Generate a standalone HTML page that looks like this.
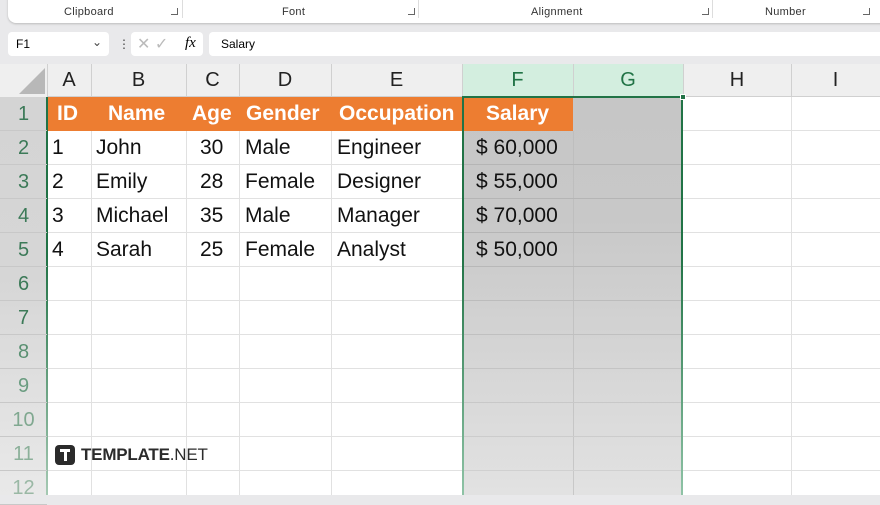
<!DOCTYPE html>
<html><head><meta charset="utf-8"><style>
*{margin:0;padding:0;box-sizing:border-box}
body{width:880px;height:495px;overflow:hidden;background:#e9e9eb;font-family:"Liberation Sans",sans-serif;position:relative}
.rib{position:absolute;left:8px;top:-10px;width:880px;height:33px;background:#fff;border-radius:8px;box-shadow:0 1px 2px #bbb}
.rl{position:absolute;top:6px;font-size:11px;color:#333;letter-spacing:.3px}
.sep{position:absolute;top:0;width:1px;height:18px;background:#ddd}
.dl{position:absolute;top:8px;width:7px;height:7px;border:1px solid #666;border-width:0 1px 1px 0}
.box{position:absolute;background:#fff;border-radius:4px;top:32px;height:24px}
.a{position:absolute}
.v{position:absolute;top:97px;width:1px;height:398px;background:#e1e1e1}
.hv{position:absolute;top:64px;width:1px;height:33px;background:#d0d0d0}
.hl{position:absolute;left:47px;width:833px;height:1px;background:#e1e1e1}
.ch{position:absolute;top:64px;height:33px;line-height:33px;text-align:center;font-size:20px;color:#222}
.rh{position:absolute;left:0;width:47px;height:34px;line-height:34px;text-align:center;font-size:20px;color:#3c7a58;border-bottom:1px solid #c8c8c8}
.t{position:absolute;height:34px;line-height:34px;font-size:21px;color:#111;white-space:nowrap}
.b{color:#fff;font-weight:bold}
</style></head><body>
<div class="rib"></div>
<div class="rl" style="left:64px">Clipboard</div><div class="dl" style="left:171px"></div><div class="sep" style="left:182px"></div>
<div class="rl" style="left:282px">Font</div><div class="dl" style="left:408px"></div><div class="sep" style="left:418px"></div>
<div class="rl" style="left:531px">Alignment</div><div class="dl" style="left:702px"></div><div class="sep" style="left:712px"></div>
<div class="rl" style="left:765px">Number</div><div class="dl" style="left:863px"></div>
<div class="box" style="left:8px;width:101px"><span style="position:absolute;left:8px;top:5px;font-size:12px">F1</span><span style="position:absolute;left:84px;top:3px;font-size:12px;color:#444">⌄</span></div>
<div style="position:absolute;left:118px;top:37px;font-size:12px;color:#444">⋮</div>
<div class="box" style="left:131px;width:72px"><span style="position:absolute;left:6px;top:2px;font-size:16px;color:#bbb">✕ ✓</span><span style="position:absolute;left:54px;top:3px;font-size:15px;font-style:italic;font-family:'Liberation Serif',serif">fx</span></div>
<div class="box" style="left:209px;width:680px;border-radius:4px 0 0 4px"><span style="position:absolute;left:12px;top:5px;font-size:12px">Salary</span></div>

<!-- column headers -->
<div class="a" style="left:0;top:64px;width:880px;height:33px;background:#efefef;border-bottom:1px solid #d0d0d0"></div>
<div class="a" style="left:462px;top:64px;width:221px;height:33px;background:#d3eedf"></div>
<div class="a" style="left:0;top:64px;width:47px;height:33px;background:#efefef"><div style="position:absolute;right:2px;bottom:3px;width:0;height:0;border-left:26px solid transparent;border-bottom:26px solid #b8b8b8"></div></div>
<div class="hv" style="left:47px"></div><div class="hv" style="left:91px"></div><div class="hv" style="left:186px"></div><div class="hv" style="left:239px"></div><div class="hv" style="left:331px"></div><div class="hv" style="left:462px"></div><div class="hv" style="left:573px"></div><div class="hv" style="left:683px"></div><div class="hv" style="left:791px"></div>
<div class="ch" style="left:47px;width:44px">A</div><div class="ch" style="left:91px;width:95px">B</div><div class="ch" style="left:186px;width:53px">C</div><div class="ch" style="left:239px;width:92px">D</div><div class="ch" style="left:331px;width:131px">E</div><div class="ch" style="left:462px;width:111px;color:#217346">F</div><div class="ch" style="left:573px;width:110px;color:#217346">G</div><div class="ch" style="left:683px;width:108px">H</div><div class="ch" style="left:791px;width:89px">I</div>

<!-- grid -->
<div class="a" style="left:47px;top:97px;width:833px;height:398px;background:#fff"></div>
<div class="hl" style="top:130px"></div><div class="hl" style="top:164px"></div><div class="hl" style="top:198px"></div><div class="hl" style="top:232px"></div><div class="hl" style="top:266px"></div><div class="hl" style="top:300px"></div><div class="hl" style="top:334px"></div><div class="hl" style="top:368px"></div><div class="hl" style="top:402px"></div><div class="hl" style="top:436px"></div><div class="hl" style="top:470px"></div>
<div class="v" style="left:91px"></div><div class="v" style="left:186px"></div><div class="v" style="left:239px"></div><div class="v" style="left:331px"></div><div class="v" style="left:791px"></div>
<div class="a" style="left:47px;top:97px;width:415px;height:34px;background:#ed7d31"></div>

<!-- selection -->
<div class="a" style="left:464px;top:98px;width:217px;height:397px;background:linear-gradient(#c6c6c6,#c8c8c8 30%,#e2e2e2)"></div>
<div class="a" style="left:464px;top:98px;width:109px;height:33px;background:#ed7d31"></div>
<div class="a" style="left:573px;top:131px;width:1px;height:364px;background:#b8b8b8;opacity:.6"></div>
<div class="a" style="left:464px;top:164px;width:217px;height:1px;background:#b5b5b5"></div><div class="a" style="left:464px;top:198px;width:217px;height:1px;background:#b5b5b5"></div><div class="a" style="left:464px;top:232px;width:217px;height:1px;background:#b5b5b5"></div><div class="a" style="left:464px;top:266px;width:217px;height:1px;background:#b8b8b8"></div><div class="a" style="left:464px;top:300px;width:217px;height:1px;background:#bcbcbc"></div><div class="a" style="left:464px;top:334px;width:217px;height:1px;background:#c0c0c0"></div><div class="a" style="left:464px;top:368px;width:217px;height:1px;background:#c4c4c4"></div><div class="a" style="left:464px;top:402px;width:217px;height:1px;background:#c8c8c8"></div><div class="a" style="left:464px;top:436px;width:217px;height:1px;background:#cccccc"></div><div class="a" style="left:464px;top:470px;width:217px;height:1px;background:#d0d0d0"></div>
<div class="a" style="left:462px;top:96px;width:2px;height:399px;background:linear-gradient(#217346,#217346 40%,#8fc3a6)"></div>
<div class="a" style="left:681px;top:96px;width:2px;height:399px;background:linear-gradient(#217346,#217346 40%,#8fc3a6)"></div>
<div class="a" style="left:462px;top:96px;width:221px;height:2px;background:#217346"></div>
<div class="a" style="left:680px;top:94px;width:6px;height:6px;background:#217346;border:1px solid #fff"></div>

<!-- row headers -->
<div class="a" style="left:0;top:97px;width:47px;height:398px;background:linear-gradient(#d4d4d4,#d6d6d6 45%,#e9e9e9)"></div>
<div class="a" style="left:46px;top:97px;width:2px;height:398px;background:linear-gradient(#217346,#217346 40%,#a5c9b3)"></div>
<div class="rh" style="top:97px">1</div><div class="rh" style="top:131px">2</div><div class="rh" style="top:165px">3</div><div class="rh" style="top:199px">4</div><div class="rh" style="top:233px">5</div><div class="rh" style="top:267px">6</div><div class="rh" style="top:301px">7</div><div class="rh" style="top:335px;color:#5a9072">8</div><div class="rh" style="top:369px;color:#6a9c80">9</div><div class="rh" style="top:403px;color:#80a890">10</div><div class="rh" style="top:437px;color:#8cb09a">11</div><div class="rh" style="top:471px;color:#9ab8a5">12</div>

<!-- text -->
<div class="t b" style="left:57px;top:97px">ID</div><div class="t b" style="left:108px;top:97px">Name</div><div class="t b" style="left:192px;top:97px">Age</div><div class="t b" style="left:246px;top:97px">Gender</div><div class="t b" style="left:339px;top:97px">Occupation</div><div class="t b" style="left:486px;top:97px">Salary</div>
<div class="t" style="left:52px;top:131px">1</div><div class="t" style="left:96px;top:131px">John</div><div class="t" style="left:200px;top:131px">30</div><div class="t" style="left:245px;top:131px">Male</div><div class="t" style="left:337px;top:131px">Engineer</div><div class="t" style="left:476px;top:131px">$ 60,000</div>
<div class="t" style="left:52px;top:165px">2</div><div class="t" style="left:96px;top:165px">Emily</div><div class="t" style="left:200px;top:165px">28</div><div class="t" style="left:245px;top:165px">Female</div><div class="t" style="left:337px;top:165px">Designer</div><div class="t" style="left:476px;top:165px">$ 55,000</div>
<div class="t" style="left:52px;top:199px">3</div><div class="t" style="left:96px;top:199px">Michael</div><div class="t" style="left:200px;top:199px">35</div><div class="t" style="left:245px;top:199px">Male</div><div class="t" style="left:337px;top:199px">Manager</div><div class="t" style="left:476px;top:199px">$ 70,000</div>
<div class="t" style="left:52px;top:233px">4</div><div class="t" style="left:96px;top:233px">Sarah</div><div class="t" style="left:200px;top:233px">25</div><div class="t" style="left:245px;top:233px">Female</div><div class="t" style="left:337px;top:233px">Analyst</div><div class="t" style="left:476px;top:233px">$ 50,000</div>

<!-- logo -->
<div style="position:absolute;left:55px;top:445px;width:20px;height:20px;background:#2b2b2b;border-radius:4px"><div style="position:absolute;left:5px;top:4px;width:10px;height:3px;background:#fff"></div><div style="position:absolute;left:8.5px;top:4px;width:3px;height:12px;background:#fff"></div></div>
<div style="position:absolute;left:81px;top:445px;font-size:17px;color:#2b2b2b;letter-spacing:-.2px"><b>TEMPLATE</b>.NET</div>
</body></html>
